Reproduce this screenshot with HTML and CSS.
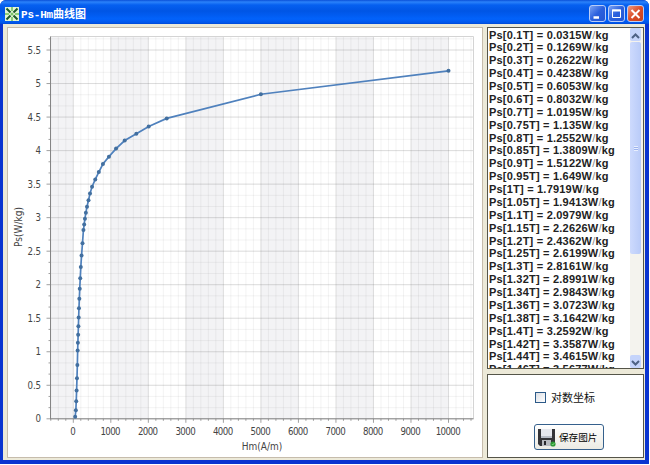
FILE: index.html
```
<!DOCTYPE html>
<html lang="zh">
<head>
  <meta charset="UTF-8">
  <title>Ps-Hm曲线图</title>
  <link rel="stylesheet" href="styles.css">
</head>
<body>
<div class="window">
  <div class="titlebar">
    <svg class="app-icon" width="14" height="14" viewBox="0 0 14 14">
      <rect width="14" height="14" fill="#e4f5d6"/>
      <path d="M1.5 1.5l4 4M12.5 1.5l-4 4M1.5 12.5l4-4M12.5 12.5l-4-4" stroke="#1d5b2b" stroke-width="2"/>
      <path d="M7 0v4M7 10v4M0 7h4M10 7h4" stroke="#8ccf77" stroke-width="2"/>
      <circle cx="7" cy="7" r="1.5" fill="#7cc46a"/>
    </svg>
    <span class="title"><span class="latin">Ps-Hm</span>曲线图</span>
    <div class="buttons">
      <div class="win-btn"><svg width="15" height="15"><path d="M3.5 11.5h5.5" stroke="#fff" stroke-width="2.5"/></svg></div>
      <div class="win-btn"><svg width="15" height="15"><path d="M3.5 4v7.5h8V4z" fill="none" stroke="#fff"/><path d="M3 4.5h9" stroke="#fff" stroke-width="2.2"/></svg></div>
      <div class="win-btn close"><svg width="15" height="15"><path d="M3.5 4l8 8M11.5 4l-8 8" stroke="#fff" stroke-width="2"/></svg></div>
    </div>
  </div>
  <div class="client">
    <div class="chart-panel">
      <svg id="chart" width="474" height="429" viewBox="8 28 474 429"></svg>
    </div>
    <div class="side">
      <div class="list">
        <div class="rows" id="rows"></div>
        <div class="scrollbar">
          <div class="arrow"><svg width="11" height="12"><path d="M2 8l3.5-3.5L9 8" fill="none" stroke="#4d6185" stroke-width="2"/></svg></div>
          <div class="thumb"><i></i></div>
          <div class="arrow down"><svg width="11" height="12"><path d="M2 4l3.5 3.5L9 4" fill="none" stroke="#4d6185" stroke-width="2"/></svg></div>
        </div>
      </div>
      <div class="options">
        <label class="check"><span class="box"></span>对数坐标</label>
        <div class="save">
          <svg width="18" height="19" viewBox="0 0 18 19">
            <path d="M0 1h17v17H2l-2-2z" fill="#343438"/>
            <path d="M3 1h11v9H3z" fill="#e6e8ee"/>
            <path d="M3 8h11v2H3z" fill="#b9bec8"/>
            <path d="M4 12h9v6H4z" fill="#b8bbc0"/>
            <path d="M6 13h2v4H6z" fill="#28282c"/>
            <circle cx="15" cy="16" r="2.6" fill="#2d9a35"/>
            <path d="M13.8 16l1 1 1.6-2" fill="none" stroke="#9ee29b" stroke-width=".7"/>
          </svg>
          <span>保存图片</span>
        </div>
      </div>
    </div>
  </div>
</div>
<script src="chart.js"></script>
</body>
</html>
```
FILE: styles.css
```
body {
  margin: 0;
  background: #fff;
  font-family: "Liberation Sans", "Noto Sans CJK SC", sans-serif;
}
.window {
  box-sizing: border-box;
  width: 649px;
  height: 464px;
  padding: 0 4px 4px 3px;
  background: #0a34d0;
  border-radius: 6px 6px 0 0;
  overflow: hidden;
}
.titlebar {
  display: flex;
  align-items: center;
  box-sizing: border-box;
  height: 24px;
  margin: 0 -4px 0 -3px;
  padding: 3px 5px 0 5px;
  background: linear-gradient(#0a50d8 0, #2b82fa 2px, #0660f0 5px, #0055e5 11px, #0262fb 19px, #0055e8 23px, #0046d0 24px);
}
.title {
  flex: 1;
  margin-left: 2px;
  color: #fff;
  font: bold 11px/14px "Noto Sans CJK SC", sans-serif;
}
.latin {
  font: bold 11px "Liberation Mono", monospace;
  letter-spacing: -.2px;
}
.buttons {
  display: flex;
  gap: 2px;
}
.win-btn {
  box-sizing: border-box;
  width: 17px;
  height: 17px;
  border: 1px solid #b9cdf8;
  border-radius: 3px;
  background: linear-gradient(135deg, #7ba2f3, #2b60dd 50%, #2456d4);
}
.win-btn svg {
  display: block;
}
.close {
  background: linear-gradient(135deg, #ee9a80, #db4c27 50%, #c7411c);
}
.client {
  box-sizing: border-box;
  display: flex;
  gap: 4px;
  height: 436px;
  padding: 3px 1px 2px 4px;
  background: #ece9d8;
}
.chart-panel {
  box-sizing: border-box;
  width: 476px;
  height: 431px;
  border: 1px solid #c6bcac;
  background: #fff;
}
.chart-panel svg {
  display: block;
}
.side {
  flex: 1;
  display: flex;
  flex-direction: column;
  gap: 5px;
}
.list {
  display: flex;
  box-sizing: border-box;
  height: 342px;
  border: 1px solid #555549;
  background: #fff;
  overflow: hidden;
}
.rows {
  flex: 1;
  padding: .6px 0 0 1px;
  font-weight: bold;
  font-size: 11px;
  line-height: 12.87px;
  letter-spacing: .21px;
  white-space: nowrap;
  color: #222;
}
.slash {
  font-weight: normal;
  color: #888;
}
.scrollbar {
  display: flex;
  flex-direction: column;
  width: 13px;
  background: #f4f3ee;
}
.arrow {
  box-sizing: border-box;
  width: 11px;
  height: 13px;
  border-radius: 2px;
  background: #c5d4fb;
}
.thumb {
  display: flex;
  align-items: center;
  justify-content: center;
  width: 11px;
  height: 212px;
  margin-top: 1px;
  border-radius: 2px;
  background: linear-gradient(90deg, #cddafd, #b9cbf8);
}
.thumb i {
  width: 4px;
  height: 5px;
  background: repeating-linear-gradient(#e8effe 0 1px, #9db3ee 1px 2px);
}
.down {
  margin-top: auto;
}
.options {
  flex: 1;
  display: flex;
  flex-direction: column;
  align-items: flex-start;
  box-sizing: border-box;
  padding: 13px 0 0 46px;
  border: 1px solid #555549;
  background: #fff;
}
.check {
  display: flex;
  align-items: center;
  gap: 5px;
  height: 18px;
  font-size: 11px;
  color: #111;
}
.box {
  box-sizing: border-box;
  width: 11px;
  height: 11px;
  margin-left: 1px;
  border: 1px solid #2c5a88;
  background: linear-gradient(135deg, #dcdfe4, #fff);
}
.save {
  display: flex;
  align-items: center;
  gap: 3px;
  box-sizing: border-box;
  width: 70px;
  height: 26px;
  margin-top: 18px;
  padding-left: 3px;
  border: 1px solid #35608c;
  border-radius: 3px;
  background: linear-gradient(#fff, #ecebe4);
  font-size: 9.6px;
  white-space: nowrap;
}
.axis {
  font: 9.6px "DejaVu Sans Condensed", "DejaVu Sans", sans-serif;
  letter-spacing: -.6px;
  fill: #444;
}
.axis-y {
  letter-spacing: -.1px;
}
.axis-title {
  font: 10px "DejaVu Sans Condensed", "DejaVu Sans", sans-serif;
  fill: #444;
}
```
FILE: chart.js
```
const losses = [
  ['0.1', '0.0315'], ['0.2', '0.1269'], ['0.3', '0.2622'], ['0.4', '0.4238'],
  ['0.5', '0.6053'], ['0.6', '0.8032'], ['0.7', '1.0195'], ['0.75', '1.135'],
  ['0.8', '1.2552'], ['0.85', '1.3809'], ['0.9', '1.5122'], ['0.95', '1.649'],
  ['1', '1.7919'], ['1.05', '1.9413'], ['1.1', '2.0979'], ['1.15', '2.2626'],
  ['1.2', '2.4362'], ['1.25', '2.6199'], ['1.3', '2.8161'], ['1.32', '2.8991'],
  ['1.34', '2.9843'], ['1.36', '3.0723'], ['1.38', '3.1642'], ['1.4', '3.2592'],
  ['1.42', '3.3587'], ['1.44', '3.4615'], ['1.46', '3.5677']
];
document.getElementById('rows').innerHTML = losses
  .map(([b, p]) => `<div>Ps[${b}T] = ${p}W<span class="slash">/</span>kg</div>`)
  .join('');

// field strength for each point
const hm = [50, 68, 78, 88, 98, 108, 116, 122, 129, 136, 143, 151, 161, 172, 185,
  200, 220, 245, 270, 290, 310, 335, 365, 405, 445, 500];
const points = hm.map((h, i) => [h, +losses[i][1]]).concat([
  [585, 3.57], [680, 3.68], [790, 3.80], [950, 3.91], [1140, 4.03], [1370, 4.15],
  [1680, 4.25], [2010, 4.36], [2490, 4.48], [5000, 4.84], [10000, 5.19]
]);

const X = v => 73.3 + v * 0.03752;
const Y = v => 418.8 - v * 67.05;
const left = 50.5, right = 473.5, topEdge = 36.5, bottom = 418.8;
const line = (x1, y1, x2, y2, c) => `<line x1="${x1}" y1="${y1}" x2="${x2}" y2="${y2}" stroke="${c}"/>`;
let svg = '';

for (let v = -1000; v < 10000; v += 2000) {
  const x = Math.max(X(v), left);
  svg += `<rect x="${x}" y="${topEdge}" width="${X(v + 1000) - x}" height="${bottom - topEdge}" fill="#f3f3f5"/>`;
}
for (let v = -600; v <= 10600; v += 200) {
  const major = v % 1000 === 0;
  svg += line(X(v), topEdge, X(v), bottom, major ? 'rgba(90,90,90,.18)' : 'rgba(90,90,90,.07)');
  svg += line(X(v), bottom, X(v), bottom + (major ? 4 : 2), '#a0a0a0');
  if (major) svg += `<text class="axis" text-anchor="middle" x="${X(v) - .6}" y="435">${v}</text>`;
}
for (let i = 0; i <= 34; i++) {
  const y = Y(i / 6), major = i % 3 === 0;
  svg += line(left, y, right, y, major ? 'rgba(90,90,90,.22)' : 'rgba(90,90,90,.07)');
  svg += line(left - (major ? 4 : 2), y, left, y, '#a0a0a0');
  if (major) svg += `<text class="axis axis-y" text-anchor="end" x="41" y="${y + 3.5}">${i / 6}</text>`;
}
svg += line(left, topEdge, right, topEdge, '#d4d4d4') + line(right, topEdge, right, bottom, '#d4d4d4');
svg += line(left, topEdge, left, bottom + .5, '#858585') + line(left, bottom, right, bottom, '#858585');
svg += '<text class="axis-title" text-anchor="middle" x="262" y="450">Hm(A/m)</text>';
svg += '<text class="axis-title" text-anchor="middle" transform="translate(22 227) rotate(-90)">Ps(W/kg)</text>';
svg += `<polyline points="${points.map(([h, p]) => X(h) + ',' + Y(p)).join(' ')}" fill="none" stroke="#4f81bd" stroke-width="1.7"/>`;
svg += points.map(([h, p]) => `<circle cx="${X(h)}" cy="${Y(p)}" r="2" fill="#426f9f"/>`).join('');
document.getElementById('chart').innerHTML = svg;
```
